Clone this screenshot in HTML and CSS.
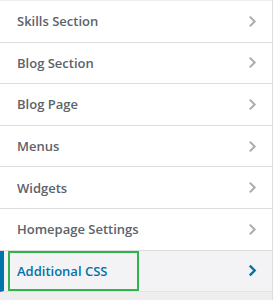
FILE: index.html
```html
<!DOCTYPE html>
<html lang="en">
  <head>
    <meta charset="UTF-8" />
    <meta name="viewport" content="width=device-width, initial-scale=1.0" />
    <title>Customizer</title>
    <link rel="stylesheet" href="styles.css">
  </head>
  <body>
    <div class="panel">
      <ul class="section-list">
        <li class="section-item">
          <span class="section-title">Skills Section</span>
          <svg class="chevron" viewBox="0 0 8 12"><path d="M1.5 1.5 L6 6 L1.5 10.5" /></svg>
        </li>
        <li class="section-item">
          <span class="section-title">Blog Section</span>
          <svg class="chevron" viewBox="0 0 8 12"><path d="M1.5 1.5 L6 6 L1.5 10.5" /></svg>
        </li>
        <li class="section-item">
          <span class="section-title">Blog Page</span>
          <svg class="chevron" viewBox="0 0 8 12"><path d="M1.5 1.5 L6 6 L1.5 10.5" /></svg>
        </li>
        <li class="section-item">
          <span class="section-title">Menus</span>
          <svg class="chevron" viewBox="0 0 8 12"><path d="M1.5 1.5 L6 6 L1.5 10.5" /></svg>
        </li>
        <li class="section-item">
          <span class="section-title">Widgets</span>
          <svg class="chevron" viewBox="0 0 8 12"><path d="M1.5 1.5 L6 6 L1.5 10.5" /></svg>
        </li>
        <li class="section-item">
          <span class="section-title">Homepage Settings</span>
          <svg class="chevron" viewBox="0 0 8 12"><path d="M1.5 1.5 L6 6 L1.5 10.5" /></svg>
        </li>
        <li class="section-item active">
          <span class="section-title highlight">Additional CSS</span>
          <svg class="chevron" viewBox="0 0 8 12"><path d="M1.5 1.5 L6 6 L1.5 10.5" /></svg>
        </li>
      </ul>
    </div>
  </body>
</html>
```

FILE: styles.css
```css
body {
  margin: 0;
  padding: 0;
  font-family: "Open Sans", "Noto Sans", sans-serif;
  background-color: #fff;
}

.panel {
  width: 272px;
  height: 300px;
  border-right: 1px solid #ddd;
  background-color: #eeeeee;
}

.section-list {
  list-style: none;
  margin: 0;
  padding: 0;
  border-top: 1px solid #eee;
}

.section-item {
  display: flex;
  align-items: center;
  justify-content: space-between;
  height: 40.6px;
  padding: 0 15px 0 17px;
  border-bottom: 1px solid #ddd;
  background-color: #fff;
  color: #5b636b;
  font-size: 13px;
  font-weight: 600;
}

.chevron {
  width: 9px;
  height: 13px;
  fill: none;
  stroke: #a7abb0;
  stroke-width: 1.8;
}

.section-item.active {
  background-color: #f3f3f5;
  color: #0073aa;
  border-left: 4px solid #0073aa;
  padding-left: 4px;
  border-bottom: 1px solid #e4e4e4;
}

.section-item.active .chevron {
  stroke: #0073aa;
  stroke-width: 2.2;
}

.highlight {
  display: flex;
  align-items: center;
  align-self: stretch;
  width: 120px;
  padding-left: 7px;
  border: 2px solid #2fb34a;
}
```
